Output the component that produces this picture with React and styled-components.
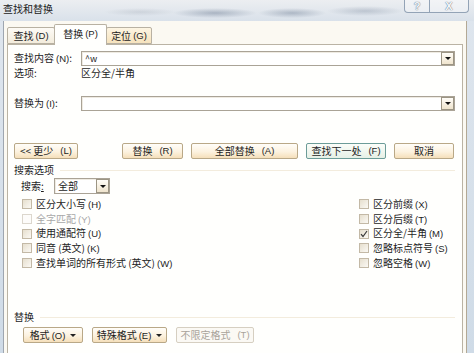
import styled, { createGlobalStyle } from "styled-components";

const Global = createGlobalStyle`
  html, body { margin: 0; padding: 0; }
  body {
    font-family: "Noto Sans CJK SC", "Liberation Sans", sans-serif;
    font-size: 10px;
    line-height: 12px;
    color: #1d1d1d;
  }
`;

const Window = styled.div`
  width: 474px;
  height: 353px;
  overflow: hidden;
  display: flex;
  flex-direction: column;
  background: linear-gradient(180deg, #dfe6ee, #cfdbe7);
`;

const TitleBar = styled.div`
  height: 21px;
  flex: none;
  display: flex;
  justify-content: space-between;
  align-items: flex-start;
  background:
    radial-gradient(ellipse 42px 5px at 215px 13px, rgba(55, 75, 105, 0.32), transparent),
    radial-gradient(ellipse 34px 5px at 292px 13px, rgba(55, 75, 105, 0.3), transparent),
    radial-gradient(ellipse 38px 5px at 365px 11px, rgba(55, 75, 105, 0.22), transparent),
    radial-gradient(ellipse 36px 4px at 140px 12px, rgba(80, 90, 110, 0.14), transparent),
    linear-gradient(180deg, #eceef1 0%, #d9e1ea 100%);
`;

const Title = styled.div`
  padding: 3px 0 0 3px;
  font-size: 10px;
  line-height: 12px;
  color: #202020;
`;

const Caption = styled.div`
  display: flex;
  margin-right: 5px;
  height: 12px;
  border: 1px solid #93a3b6;
  border-top: none;
  border-radius: 0 0 4px 4px;
  background: rgba(255, 255, 255, 0.35);
`;

const CaptionBtn = styled.div`
  width: ${(p) => p.$w}px;
  display: flex;
  justify-content: center;
  align-items: center;
  font-family: "Liberation Sans", sans-serif;
  font-size: 11px;
  font-weight: bold;
  color: #f4f6f9;
  text-shadow: 0 0 1px #6d7d92, 0 0 1px #6d7d92;
  & + & { border-left: 1px solid #93a3b6; }
`;

const Client = styled.div`
  flex: 1;
  display: flex;
  flex-direction: column;
  margin: 0 7px 0 3px;
  padding: 3px 3px 0 3px;
  border-left: 1px solid #9ea6b0;
  border-right: 1px solid #b3a995;
  background: #fbf9f2;
  min-height: 0;
`;

const TabRow = styled.div`
  height: 20px;
  flex: none;
  display: flex;
  align-items: flex-end;
  position: relative;
  z-index: 1;
`;

const Tab = styled.div`
  width: ${(p) => p.$w}px;
  height: ${(p) => (p.$active ? 21 : 17)}px;
  margin-bottom: ${(p) => (p.$active ? -1 : 0)}px;
  box-sizing: border-box;
  display: flex;
  justify-content: center;
  align-items: center;
  padding-bottom: ${(p) => (p.$active ? 2 : 0)}px;
  border: 1px solid #b8b1a2;
  border-bottom: ${(p) => (p.$active ? "none" : "1px solid #b8b1a2")};
  border-radius: 2px 2px 0 0;
  background: ${(p) =>
    p.$active
      ? "#fffffd"
      : p.$warm
      ? "linear-gradient(180deg, #fdf5e3, #f6e3bd)"
      : "linear-gradient(180deg, #fdfbf6, #f3ecdc)"};
  & + & { margin-left: -1px; }
`;

const Panel = styled.div`
  flex: 1;
  display: flex;
  flex-direction: column;
  padding: 0 7px 0 6px;
  border: 1px solid #bab3a4;
  border-bottom: none;
  background: #fffffd;
`;

const FieldRow = styled.div`
  display: flex;
  align-items: center;
  height: ${(p) => p.$h || 15}px;
  margin-top: ${(p) => p.$mt || 0}px;
`;

const Label = styled.div`
  width: ${(p) => p.$w}px;
  flex: none;
  padding-left: ${(p) => p.$pl || 0}px;
  box-sizing: border-box;
  white-space: nowrap;
`;

const KeyMark = styled.span`
  font-family: "Liberation Sans", sans-serif;
  font-size: 9.5px;
  margin-left: ${(p) => (p.$tight ? 0 : 2)}px;
  color: inherit;
`;

const Combo = styled.div`
  flex: ${(p) => (p.$w ? "none" : 1)};
  width: ${(p) => (p.$w ? `${p.$w}px` : "auto")};
  height: ${(p) => p.$h || 15}px;
  box-sizing: border-box;
  display: flex;
  align-items: center;
  justify-content: space-between;
  border: 1px solid #aaa396;
  background: #fff;
  box-shadow: inset 1px 1px 0 #efebe2;
`;

const ComboText = styled.span`
  padding-left: 3px;
  font-size: ${(p) => p.$fs || 10}px;
`;

const DropBtn = styled.div`
  width: 13px;
  height: 100%;
  box-sizing: border-box;
  display: flex;
  justify-content: center;
  align-items: center;
  border: 1px solid #9c9584;
  background: linear-gradient(180deg, #fffdf8, #efe4cd);
  &::after {
    content: "";
    border-left: 3px solid transparent;
    border-right: 3px solid transparent;
    border-top: 3px solid #111;
  }
`;

const ButtonRow = styled.div`
  display: flex;
  gap: ${(p) => p.$gap}px;
  margin-top: ${(p) => p.$mt}px;
  padding-left: ${(p) => p.$pl || 0}px;
`;

const Button = styled.div`
  width: ${(p) => p.$w}px;
  height: 16px;
  box-sizing: border-box;
  display: flex;
  justify-content: center;
  align-items: center;
  gap: 5px;
  margin-right: ${(p) => p.$mr || 0}px;
  border: 1px solid ${(p) => (p.$default ? "#6c9c98" : p.$disabled ? "#d6cfc1" : "#b9a887")};
  border-radius: 2px;
  background: ${(p) =>
    p.$disabled
      ? "#fbf9f4"
      : p.$default
      ? "linear-gradient(180deg, #fbfdf9, #e6f0e6)"
      : "linear-gradient(180deg, #fffdf9 0%, #fcf2df 55%, #f5dfba 100%)"};
  color: ${(p) => (p.$disabled ? "#a9a39a" : "#1d1d1d")};
  white-space: nowrap;
`;

const Caret = styled.span`
  border-left: 3px solid transparent;
  border-right: 3px solid transparent;
  border-top: 3px solid #222;
`;

const Heading = styled.div`
  display: flex;
  align-items: center;
  gap: 6px;
  height: 13px;
  margin-top: ${(p) => p.$mt}px;
  &::after {
    content: "";
    flex: 1;
    border-top: 1px solid #f3ecdd;
    margin-top: 1px;
  }
`;

const OptionGrid = styled.div`
  display: grid;
  grid-template-columns: 337px 1fr;
  grid-template-rows: repeat(5, 14.7px);
  grid-auto-flow: column;
  margin-top: 3px;
  padding-left: 8px;
`;

const Check = styled.div`
  display: flex;
  align-items: center;
  gap: 4px;
  white-space: nowrap;
  color: ${(p) => (p.$disabled ? "#a8a8a8" : "#1d1d1d")};
`;

const Box = styled.span`
  width: 10px;
  height: 10px;
  flex: none;
  box-sizing: border-box;
  display: flex;
  justify-content: center;
  align-items: center;
  border: 1px solid ${(p) => (p.$disabled ? "#dcd7cd" : "#c3b9a6")};
  background: ${(p) =>
    p.$disabled ? "#fdfcfa" : "linear-gradient(135deg, #e6dfce, #fbf9f4)"};
`;

const Key = ({ k, tight }) => <KeyMark $tight={tight}>({k})</KeyMark>;

const left = [
  ["区分大小写", "H"],
  ["全字匹配", "Y", false, true],
  ["使用通配符", "U"],
  ["同音 (英文)", "K"],
  ["查找单词的所有形式 (英文)", "W"],
];

const right = [
  ["区分前缀", "X"],
  ["区分后缀", "T"],
  ["区分全/半角", "M", true],
  ["忽略标点符号", "S"],
  ["忽略空格", "W"],
];

function CheckItem({ label, k, checked, disabled }) {
  return (
    <Check $disabled={disabled}>
      <Box $disabled={disabled}>
        {checked && (
          <svg width="8" height="8" viewBox="0 0 8 8">
            <path d="M1 4.2 L3 6.5 L7 1" fill="none" stroke="#3a3a3a" strokeWidth="1.2" />
          </svg>
        )}
      </Box>
      <span>
        {label}
        <Key k={k} />
      </span>
    </Check>
  );
}

export default function App() {
  return (
    <>
      <Global />
      <Window>
        <TitleBar>
          <Title>查找和替换</Title>
          <Caption>
            <CaptionBtn $w={24}>?</CaptionBtn>
            <CaptionBtn $w={38}>X</CaptionBtn>
          </Caption>
        </TitleBar>
        <Client>
          <TabRow>
            <Tab $w={48}>
              查找<Key k="D" />
            </Tab>
            <Tab $w={53} $active>
              替换<Key k="P" />
            </Tab>
            <Tab $w={46} $warm>
              定位<Key k="G" />
            </Tab>
          </TabRow>
          <Panel>
            <FieldRow $mt={6}>
              <Label $w={67}>
                查找内容<Key k="N" />:
              </Label>
              <Combo>
                <ComboText $fs={9}>^w</ComboText>
                <DropBtn />
              </Combo>
            </FieldRow>
            <FieldRow $h={13}>
              <Label $w={67}>选项:</Label>
              <span>区分全/半角</span>
            </FieldRow>
            <FieldRow $mt={17}>
              <Label $w={67}>
                替换为<Key k="I" />:
              </Label>
              <Combo>
                <ComboText />
                <DropBtn />
              </Combo>
            </FieldRow>
            <ButtonRow $gap={8} $mt={32}>
              <Button $w={64} $mr={36}>
                &lt;&lt; 更少<Key k="L" />
              </Button>
              <Button $w={61}>
                替换<Key k="R" />
              </Button>
              <Button $w={107}>
                全部替换<Key k="A" />
              </Button>
              <Button $w={80} $default>
                查找下一处<Key k="F" />
              </Button>
              <Button $w={60}>取消</Button>
            </ButtonRow>
            <Heading $mt={4}>搜索选项</Heading>
            <FieldRow $h={16} $mt={2}>
              <Label $w={40} $pl={7}>
                搜索<u>:</u>
              </Label>
              <Combo $w={56} $h={16}>
                <ComboText>全部</ComboText>
                <DropBtn />
              </Combo>
            </FieldRow>
            <OptionGrid>
              {left.map(([label, k, checked, disabled]) => (
                <CheckItem key={label} label={label} k={k} checked={checked} disabled={disabled} />
              ))}
              {right.map(([label, k, checked, disabled]) => (
                <CheckItem key={label} label={label} k={k} checked={checked} disabled={disabled} />
              ))}
            </OptionGrid>
            <Heading $mt={40}>替换</Heading>
            <ButtonRow $gap={9} $mt={4} $pl={9}>
              <Button $w={60}>
                <span>
                  格式<Key k="O" />
                </span>
                <Caret />
              </Button>
              <Button $w={75}>
                <span>
                  特殊格式<Key k="E" />
                </span>
                <Caret />
              </Button>
              <Button $w={78} $disabled>
                不限定格式<Key k="T" />
              </Button>
            </ButtonRow>
          </Panel>
        </Client>
      </Window>
    </>
  );
}
